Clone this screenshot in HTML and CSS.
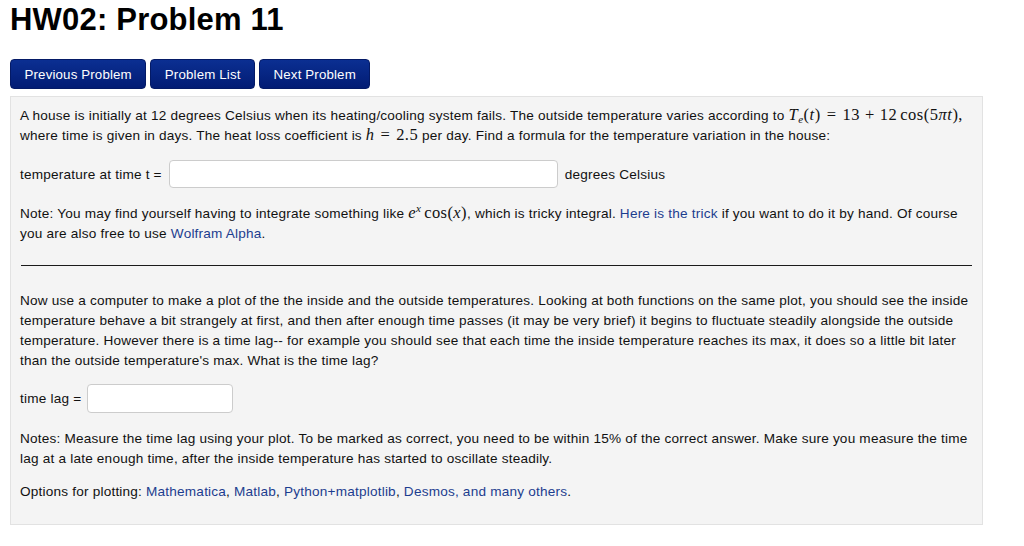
FILE: index.html
```html
<!DOCTYPE html>
<html>
<head>
<meta charset="utf-8">
<title>HW02: Problem 11</title>
<link rel="stylesheet" href="styles.css">
</head>
<body>
<h1 class="title">HW02: Problem 11</h1>
<nav class="nav">
  <a class="btn" href="#">Previous Problem</a>
  <a class="btn" href="#">Problem List</a>
  <a class="btn" href="#">Next Problem</a>
</nav>
<div class="panel">
  <p class="para">A house is initially at 12 degrees Celsius when its heating/cooling system fails. The outside temperature varies according to <span class="m wide-m"><i>T</i><sub class="sb"><i>e</i></sub>(<i>t</i>)<span class="rel">=</span>13<span class="bin">+</span>12<span class="thin"></span>cos(5<i>πt</i>),</span> where time is given in days. The heat loss coefficient is <span class="m"><i>h</i><span class="rel">=</span>2.5</span> per day. Find a formula for the temperature variation in the house:</p>
  <div class="row row-1">
    <span>temperature at time t =</span>
    <span class="input wide"></span>
    <span>degrees Celsius</span>
  </div>
  <p class="para note">Note: You may find yourself having to integrate something like <span class="m"><i>e</i><sup class="sp"><i>x</i></sup><span class="thin"></span>cos(<i>x</i>)</span>, which is tricky integral. <a class="lnk" href="#">Here is the trick</a> if you want to do it by hand. Of course you are also free to use <a class="lnk" href="#">Wolfram Alpha</a>.</p>
  <hr class="rule">
  <p class="para now">Now use a computer to make a plot of the the inside and the outside temperatures. Looking at both functions on the same plot, you should see the inside temperature behave a bit strangely at first, and then after enough time passes (it may be very brief) it begins to fluctuate steadily alongside the outside temperature. However there is a time lag-- for example you should see that each time the inside temperature reaches its max, it does so a little bit later than the outside temperature's max. What is the time lag?</p>
  <div class="row row-2">
    <span>time lag =</span>
    <span class="input small"></span>
  </div>
  <p class="para notes">Notes: Measure the time lag using your plot. To be marked as correct, you need to be within 15% of the correct answer. Make sure you measure the time lag at a late enough time, after the inside temperature has started to oscillate steadily.</p>
  <p class="para options">Options for plotting: <a class="lnk" href="#">Mathematica</a>, <a class="lnk" href="#">Matlab</a>, <a class="lnk" href="#">Python+matplotlib</a>, <a class="lnk" href="#">Desmos, and many others</a>.</p>
</div>
</body>
</html>
```
FILE: styles.css
```css
html, body {
  margin: 0;
  padding: 0;
  background: #ffffff;
}
body {
  padding: 0 10px;
  font-family: "Liberation Sans", Arial, sans-serif;
  font-size: 13.6px;
  letter-spacing: 0.2px;
  color: #111;
  width: 973px;
}
.title {
  margin: 0;
  padding-top: 3px;
  height: 55px;
  font-size: 31px;
  line-height: 34px;
  font-weight: bold;
  color: #000;
  letter-spacing: 0.2px;
}
.nav {
  display: flex;
  gap: 4px;
  height: 30px;
  margin-top: 1px;
  margin-bottom: 7px;
}
.btn {
  display: flex;
  align-items: center;
  padding: 0 13.5px;
  height: 30px;
  box-sizing: border-box;
  border-radius: 4px;
  background: linear-gradient(#0b2f92, #021c74);
  border: 1px solid #041a66;
  color: #fff;
  text-decoration: none;
  font-size: 13.3px;
  letter-spacing: 0.15px;
}
.panel {
  box-sizing: border-box;
  width: 973px;
  height: 429px;
  background: #f4f4f4;
  border: 1px solid #e2e2e2;
  padding: 9px 10px 0 9px;
}
.para {
  margin: 0;
  line-height: 20px;
}
.m {
  font-family: "Liberation Serif", "Times New Roman", serif;
  font-size: 16.5px;
  letter-spacing: 0.4px;
  line-height: 16px;
  white-space: nowrap;
}
.wide-m {
  letter-spacing: 0.5px;
}
.rel {
  margin: 0 6px;
}
.bin {
  margin: 0 5px;
}
.thin {
  display: inline-block;
  width: 3px;
}
.sb {
  font-size: 11px;
  vertical-align: -3px;
  line-height: 0;
}
.sp {
  font-size: 11px;
  vertical-align: 6px;
  line-height: 0;
}
.row {
  display: flex;
  align-items: center;
  gap: 7px;
}
.row-1 { margin-top: 14px; }
.row-2 { margin-top: 13px; gap: 6px; }
.input {
  display: block;
  box-sizing: border-box;
  background: #fff;
  border: 1px solid #cccccc;
  border-radius: 4px;
}
.input.wide { width: 389px; height: 28px; }
.input.small { width: 146px; height: 29px; }
.note { margin-top: 16px; }
.rule {
  margin: 21px 0 0 1px;
  border: 0;
  height: 1px;
  background: #1a1a1a;
}
.now { margin-top: 25px; }
.notes { margin-top: 16px; }
.options { margin-top: 13px; }
.lnk {
  color: #1c3d8f;
  text-decoration: none;
}
```
